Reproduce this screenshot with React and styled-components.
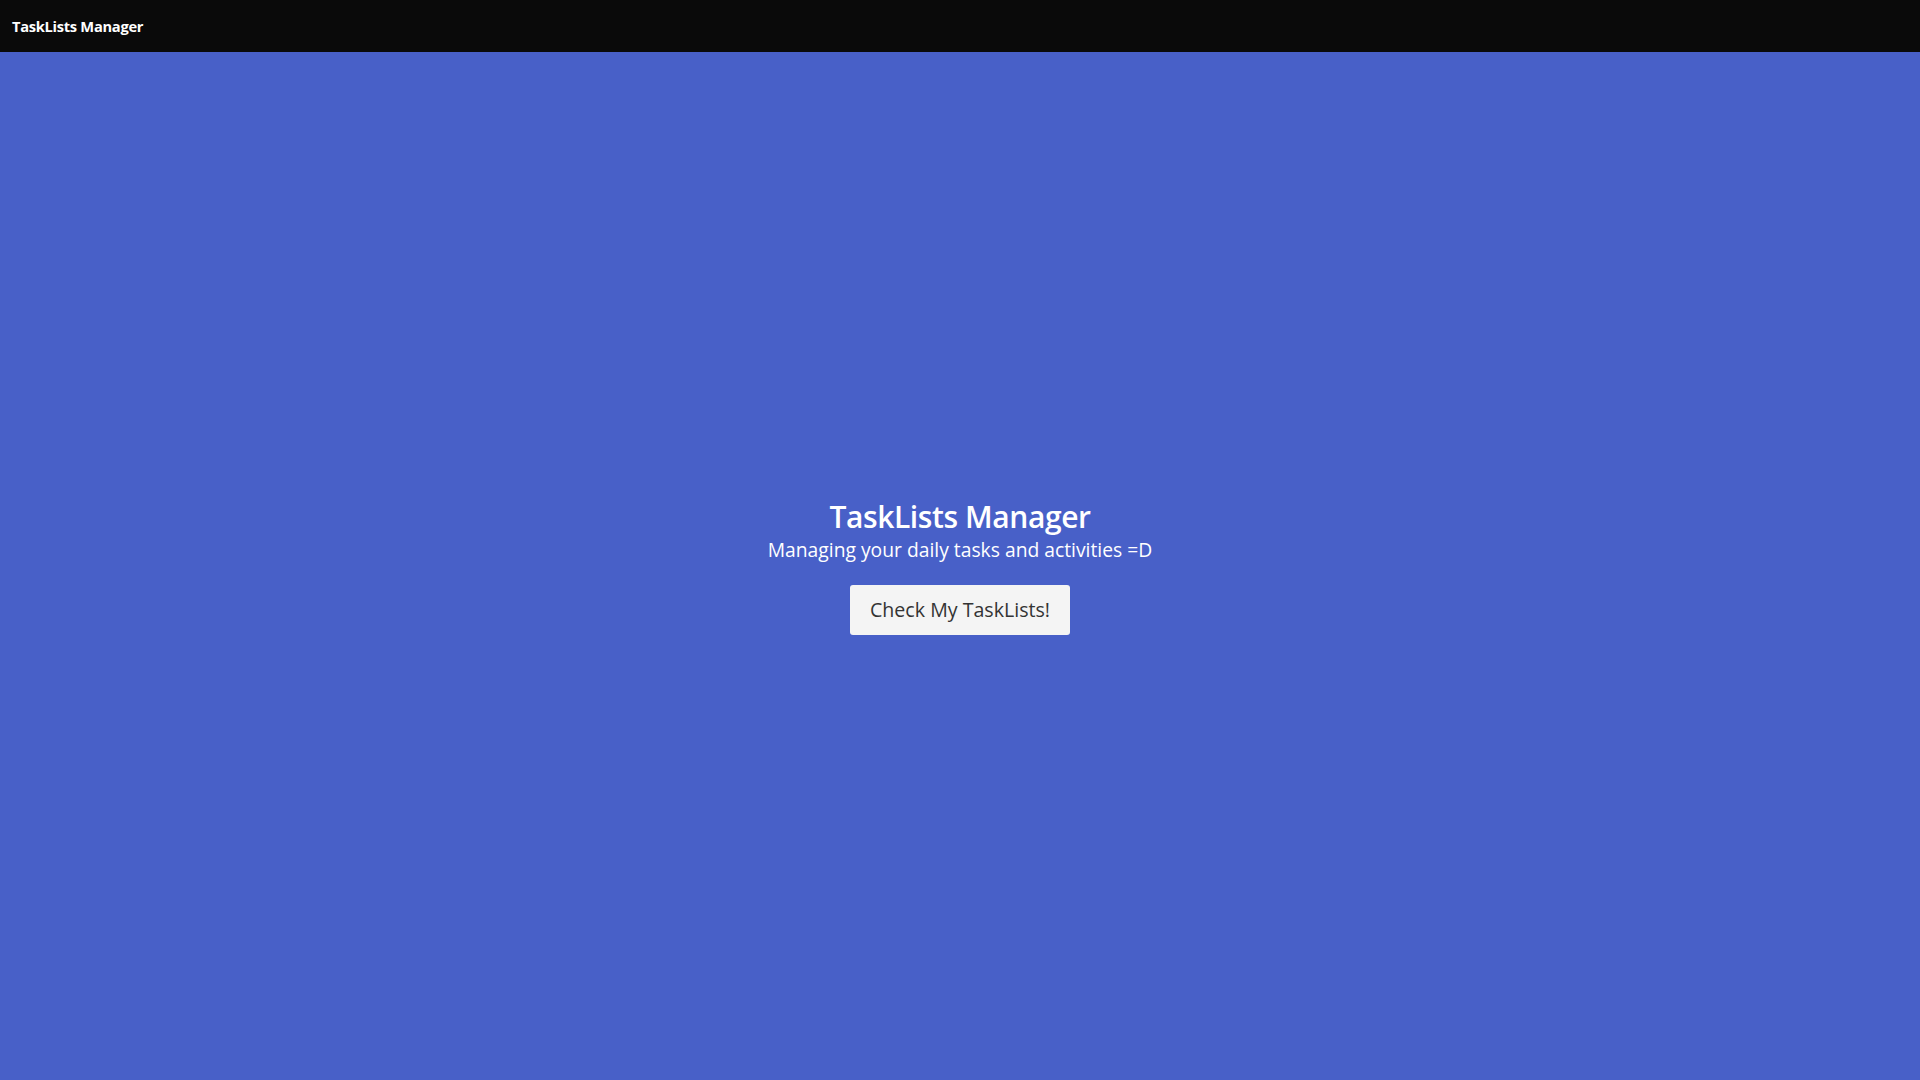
import React from "react";
import styled, { createGlobalStyle } from "styled-components";

const GlobalStyle = createGlobalStyle`
  html, body {
    margin: 0;
    padding: 0;
    height: 100%;
  }
  body {
    font-family: "Open Sans", "Noto Sans", sans-serif;
    background: #4860c8;
  }
  #root {
    height: 100%;
  }
`;

const Page = styled.div`
  display: flex;
  flex-direction: column;
  height: 100vh;
`;

const NavBar = styled.nav`
  height: 52px;
  flex-shrink: 0;
  background: #0a0a0a;
  display: flex;
  align-items: center;
  padding: 0 12px;
  box-sizing: border-box;
`;

const Brand = styled.a`
  color: #ffffff;
  font-size: 14.7px;
  font-weight: 700;
  letter-spacing: -0.3px;
  text-decoration: none;
`;

const Hero = styled.main`
  flex: 1;
  display: flex;
  flex-direction: column;
  align-items: center;
  justify-content: center;
  color: #ffffff;
  text-align: center;
  padding-top: 2px;
`;

const Title = styled.h1`
  margin: 0;
  font-size: 30px;
  font-weight: 600;
  line-height: 1.2;
  letter-spacing: -0.4px;
`;

const Subtitle = styled.p`
  margin: 2px 0 22px;
  font-size: 19.3px;
  line-height: 1.3;
  letter-spacing: 0;
`;

const ActionButton = styled.button`
  width: 220px;
  height: 50px;
  border: none;
  border-radius: 3px;
  background: #f4f4f4;
  color: #333333;
  font-family: inherit;
  font-size: 19.6px;
  letter-spacing: 0;
  cursor: pointer;
`;

export default function App() {
  return (
    <>
      <GlobalStyle />
      <Page>
        <NavBar>
          <Brand href="#">TaskLists Manager</Brand>
        </NavBar>
        <Hero>
          <Title>TaskLists Manager</Title>
          <Subtitle>Managing your daily tasks and activities =D</Subtitle>
          <ActionButton>Check My TaskLists!</ActionButton>
        </Hero>
      </Page>
    </>
  );
}
